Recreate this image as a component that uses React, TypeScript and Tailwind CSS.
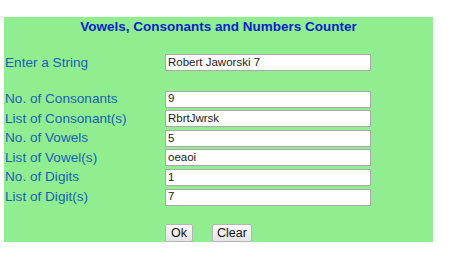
const rows = [
  { label: "No. of Consonants", value: "9" },
  { label: "List of Consonant(s)", value: "RbrtJwrsk" },
  { label: "No. of Vowels", value: "5" },
  { label: "List of Vowel(s)", value: "oeaoi" },
  { label: "No. of Digits", value: "1" },
  { label: "List of Digit(s)", value: "7" },
];

function Field({ label, value }: { label: string; value: string }) {
  return (
    <div className="flex items-center h-[19.6px]">
      <span className="w-[161px] pl-[1px] text-[13.6px] leading-[16px] text-[#1a5fb4]">{label}</span>
      <input
        readOnly
        value={value}
        className="w-[206px] h-[17px] px-[2px] bg-white border border-[#a9a9a9] text-[11.5px] text-[#222] outline-none"
        style={{ fontFamily: "inherit" }}
      />
    </div>
  );
}

export default function App() {
  return (
    <div className="w-[474px] h-[265px] bg-white pt-[17px] pl-[4px]" style={{ fontFamily: '"Liberation Sans", Arial, sans-serif' }}>
      <div className="w-[429px] h-[225px] bg-[#90ee90] flex flex-col">
        <div className="h-[36px] pt-[2px] text-center text-[13.5px] leading-[16px] font-bold text-[#0a1fc8]">
          Vowels, Consonants and Numbers Counter
        </div>
        <Field label="Enter a String" value="Robert Jaworski 7" />
        <div className="h-[16.7px]" />
        {rows.map((r) => (
          <Field key={r.label} label={r.label} value={r.value} />
        ))}
        <div className="h-[17px]" />
        <div className="flex pl-[161px] gap-[19px]">
          <button className="w-[28px] h-[18px] border border-[#b5b5b5] rounded-[2px] bg-gradient-to-b from-[#fafafa] to-[#e4e4e4] text-[12.5px] leading-[14px] text-[#111]">
            Ok
          </button>
          <button className="w-[40px] h-[18px] border border-[#b5b5b5] rounded-[2px] bg-gradient-to-b from-[#fafafa] to-[#e4e4e4] text-[12.5px] leading-[14px] text-[#111]">
            Clear
          </button>
        </div>
      </div>
    </div>
  );
}
